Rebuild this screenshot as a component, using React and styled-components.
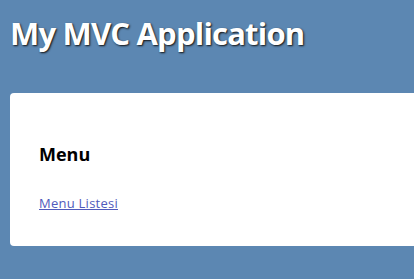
import React from "react";
import styled, { createGlobalStyle } from "styled-components";

const Global = createGlobalStyle`
  html, body { margin: 0; padding: 0; }
  body {
    background-color: #5c87b2;
    font-family: "Open Sans", "DejaVu Sans", sans-serif;
    font-size: 12px;
    color: #696969;
  }
`;

const Viewport = styled.div`
  width: 100%;
  height: 279px;
  overflow: hidden;
`;

const Page = styled.div`
  display: flex;
  flex-direction: column;
  padding-left: 10px;
  width: 440px;
`;

const Header = styled.header`
  display: flex;
  align-items: center;
  height: 63px;
  padding-bottom: 30px;
`;

const Title = styled.h1`
  margin: 0;
  font-family: "Open Sans", sans-serif;
  font-weight: 700;
  font-size: 31px;
  color: #fff;
  text-shadow: 1px 1px 2px #111;
  letter-spacing: -0.8px;
  padding-top: 2px;
`;

const Main = styled.main`
  background: #fff;
  border-radius: 4px;
  padding: 50px 29px 36px;
  height: 153px;
  box-sizing: border-box;
`;

const Heading = styled.h2`
  margin: 0 0 29px;
  font-size: 18px;
  font-weight: 700;
  color: #000;
  line-height: 22px;
`;

const Link = styled.a`
  font-size: 13px;
  letter-spacing: 0.25px;
  color: #505abc;
  text-decoration: underline;
`;

export default function App() {
  return (
    <>
      <Global />
      <Viewport>
        <Page>
          <Header>
            <Title>My MVC Application</Title>
          </Header>
          <Main>
            <Heading>Menu</Heading>
            <Link href="#">Menu Listesi</Link>
          </Main>
        </Page>
      </Viewport>
    </>
  );
}
